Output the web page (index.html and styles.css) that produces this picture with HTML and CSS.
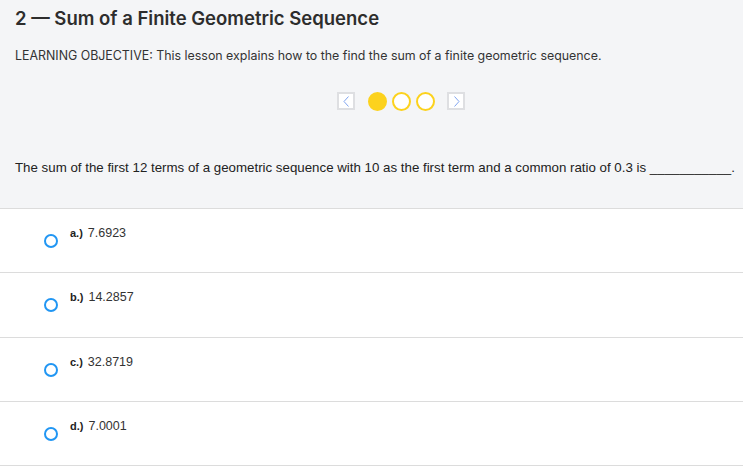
FILE: index.html
```html
<!DOCTYPE html>
<html>
<head>
<meta charset="utf-8">
<link rel="stylesheet" href="styles.css">
</head>
<body>
<div class="top">
  <h1 class="title">2 — Sum of a Finite Geometric Sequence</h1>
  <p class="objective">LEARNING OBJECTIVE: This lesson explains how to the find the sum of a finite geometric sequence.</p>
  <div class="nav">
    <span class="navbtn prev"><svg width="11" height="13" viewBox="0 0 11 13"><path d="M7.5 1.5 L3 6.5 L7.5 11.5" fill="none" stroke="#7fa4f0" stroke-width="1"/></svg></span>
    <span class="dot filled"></span>
    <span class="dot"></span>
    <span class="dot"></span>
    <span class="navbtn next"><svg width="11" height="13" viewBox="0 0 11 13"><path d="M3.5 1.5 L8 6.5 L3.5 11.5" fill="none" stroke="#7fa4f0" stroke-width="1"/></svg></span>
  </div>
  <p class="question">The sum of the first 12 terms of a geometric sequence with 10 as the first term and a common ratio of 0.3 is ___________.</p>
</div>
<ul class="options">
  <li class="option"><span class="radio"></span><span class="letter">a.)</span><span class="value">7.6923</span></li>
  <li class="option"><span class="radio"></span><span class="letter">b.)</span><span class="value">14.2857</span></li>
  <li class="option"><span class="radio"></span><span class="letter">c.)</span><span class="value">32.8719</span></li>
  <li class="option"><span class="radio"></span><span class="letter">d.)</span><span class="value">7.0001</span></li>
</ul>
</body>
</html>
```

FILE: styles.css
```css
html, body {
  margin: 0;
  padding: 0;
  background: #ffffff;
}
body {
  font-family: "Inter", "Liberation Sans", sans-serif;
  color: #333333;
}
.top {
  background: #f4f5f7;
  height: 209px;
  box-sizing: border-box;
  padding: 7px 15px 0 15px;
  border-bottom: 1px solid #dcdcdc;
}
.title {
  margin: 0;
  font-size: 18.5px;
  font-weight: 600;
  line-height: 22px;
  color: #2d2d2d;
}
.objective {
  margin: 19px 0 0 0;
  font-size: 12.4px;
  line-height: 16px;
  color: #333;
  white-space: nowrap;
}
.nav {
  display: flex;
  justify-content: center;
  align-items: center;
  margin-top: 26px;
  padding-left: 59px;
  height: 22px;
}
.navbtn {
  width: 14px;
  height: 14px;
  border: 2px solid #dedfe2;
  background: #fff;
  display: flex;
  align-items: center;
  justify-content: center;
}
.navbtn.prev {
  margin-right: 10px;
}
.navbtn.next {
  margin-left: 10px;
}
.dot {
  width: 15px;
  height: 15px;
  border-radius: 50%;
  border: 2.5px solid #fcd21d;
  background: #fff;
  margin: 0 2.5px;
}
.dot.filled {
  background: #fcd21d;
}
.question {
  margin: 48px 0 0 0;
  font-family: "Liberation Sans", sans-serif;
  font-size: 13.3px;
  line-height: 16px;
  color: #222;
  white-space: nowrap;
}
.options {
  list-style: none;
  margin: 0;
  padding: 0;
}
.option {
  height: 64.25px;
  box-sizing: border-box;
  border-bottom: 1px solid #dcdcdc;
  display: flex;
  align-items: flex-start;
  padding: 17px 0 0 44px;
  font-family: "Liberation Sans", sans-serif;
}
.radio {
  width: 10px;
  height: 10px;
  border: 2px solid #2196f3;
  border-radius: 50%;
  margin-top: 8px;
  margin-right: 12px;
}
.letter {
  font-size: 11px;
  font-weight: 700;
  color: #222;
  margin-right: 5px;
  line-height: 14px;
}
.value {
  font-size: 12.5px;
  color: #333;
  line-height: 14px;
}
```
